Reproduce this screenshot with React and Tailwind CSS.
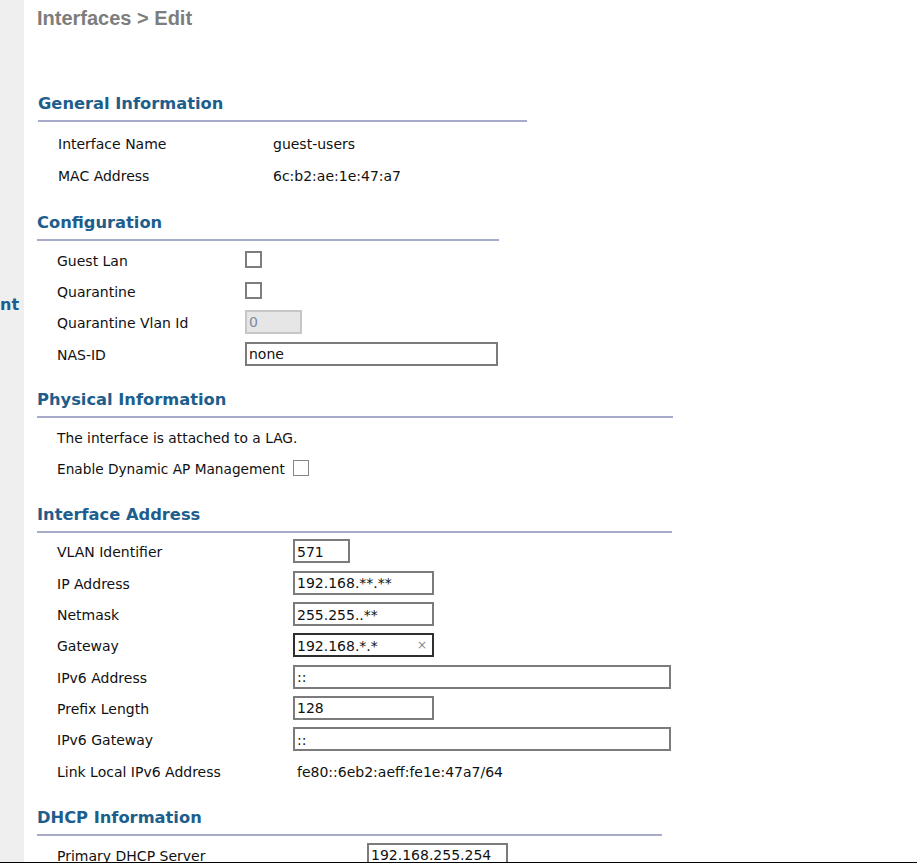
import React from "react";

const font = { fontFamily: '"DejaVu Sans", Verdana, sans-serif' };

function Heading({ children, lineW, shift }) {
  return (
    <div className={shift ? "ml-[1px]" : ""}>
      <div className="h-[20px] pt-[1px] leading-[20px] text-[16.3px] font-bold text-[#1d5e8c] whitespace-nowrap">{children}</div>
      <div className="mt-[7px] h-[2px] bg-[#a6abc9]" style={{ width: lineW }} />
    </div>
  );
}

function Row({ label, labelW, children, h = "h-[31.3px]", pl = "pl-[20px]" }) {
  return (
    <div className={`flex items-center ${h} ${pl}`}>
      <div className="shrink-0 pt-[3px] text-[14px] text-[#111]" style={{ width: labelW }}>{label}</div>
      {children}
    </div>
  );
}

function TextBox({ value, w, dark, clear }) {
  return (
    <div className="relative">
      <input
        readOnly
        defaultValue={value}
        className={`block h-[24px] border-2 ${dark ? "border-[#2f2f2f]" : "border-[#7b7b7b]"} bg-white px-[2px] pt-[1px] text-[14px] text-[#111] outline-none`}
        style={{ width: w, fontFamily: '"DejaVu Sans", Verdana, sans-serif' }}
      />
      {clear && (
        <span className="absolute right-[7px] top-[4px] text-[12px] text-[#8a8a8a] leading-[16px]">×</span>
      )}
    </div>
  );
}

function Check({ light }) {
  return light ? (
    <div className="ml-[8px] h-[16px] w-[16px] border border-[#858585] bg-white" />
  ) : (
    <div className="h-[17px] w-[17px] border-2 border-[#7d7d7d] bg-white" />
  );
}

export default function App() {
  return (
    <div className="flex h-[863px] w-[917px] flex-col overflow-hidden bg-white" style={font}>
      <div className="flex flex-1 overflow-hidden">
        <div className="w-[24px] shrink-0 overflow-hidden bg-[#efefef]">
          <div className="mt-[295px] h-[20px] leading-[20px] text-[16px] font-bold text-[#1d5e8c]">nt</div>
        </div>
        <div className="flex-1 pl-[13px]">
          <div
            className="h-[36px] leading-[36px] text-[20px] font-bold text-[#7d7d7d]"
            style={{ fontFamily: '"Liberation Sans", Arial, sans-serif' }}
          >
            Interfaces &gt; Edit
          </div>

          {/* General Information */}
          <div className="mt-[57px]">
            <Heading lineW={489} shift>General Information</Heading>
            <div className="pt-[5px]">
              <Row label="Interface Name" labelW={215} h="h-[32px]" pl="pl-[21px]">
                <span className="pt-[3px] text-[14px] text-[#111]">guest-users</span>
              </Row>
              <Row label="MAC Address" labelW={215} h="h-[32px]" pl="pl-[21px]">
                <span className="pt-[3px] text-[14px] text-[#111]">6c:b2:ae:1e:47:a7</span>
              </Row>
            </div>
          </div>

          {/* Configuration */}
          <div className="mt-[21px]">
            <Heading lineW={462}>Configuration</Heading>
            <div className="pt-[3px]">
              <Row label="Guest Lan" labelW={188}><Check /></Row>
              <Row label="Quarantine" labelW={188}><Check /></Row>
              <Row label="Quarantine Vlan Id" labelW={188}>
                <div className="flex h-[24px] w-[57px] items-center border-2 border-[#c6c6c6] bg-[#e6e6e6] px-[2px] pt-[1px] text-[14px] text-[#7b8aa1]">0</div>
              </Row>
              <Row label="NAS-ID" labelW={188}><TextBox value="none" w={253} /></Row>
            </div>
          </div>

          {/* Physical Information */}
          <div className="mt-[20px]">
            <Heading lineW={636}>Physical Information</Heading>
            <div className="pt-[3px]">
              <div className="flex h-[31.3px] items-center pl-[20px] pt-[3px] text-[13.8px] text-[#111]">The interface is attached to a LAG.</div>
              <div className="flex h-[31.3px] items-center pl-[20px] text-[13.7px] text-[#111]">
                <span className="pt-[3px]">Enable Dynamic AP Management</span>
                <Check light />
              </div>
            </div>
          </div>

          {/* Interface Address */}
          <div className="mt-[20px]">
            <Heading lineW={635}>Interface Address</Heading>
            <div className="pt-[3px]">
              <Row label="VLAN Identifier" labelW={236}><TextBox value="571" w={57} /></Row>
              <Row label="IP Address" labelW={236}><TextBox value="192.168.**.**" w={141} /></Row>
              <Row label="Netmask" labelW={236}><TextBox value="255.255..**" w={141} /></Row>
              <Row label="Gateway" labelW={236}><TextBox value="192.168.*.*" w={141} dark clear /></Row>
              <Row label="IPv6 Address" labelW={236}><TextBox value="::" w={378} /></Row>
              <Row label="Prefix Length" labelW={236}><TextBox value="128" w={141} /></Row>
              <Row label="IPv6 Gateway" labelW={236}><TextBox value="::" w={378} /></Row>
              <Row label="Link Local IPv6 Address" labelW={240}>
                <span className="pt-[3px] text-[14px] text-[#111]">fe80::6eb2:aeff:fe1e:47a7/64</span>
              </Row>
            </div>
          </div>

          {/* DHCP Information */}
          <div className="mt-[21px]">
            <Heading lineW={625}>DHCP Information</Heading>
            <div className="pt-[3px]">
              <Row label="Primary DHCP Server" labelW={310}><TextBox value="192.168.255.254" w={141} /></Row>
            </div>
          </div>
        </div>
      </div>
      <div className="h-[1px] shrink-0 bg-black" />
    </div>
  );
}
